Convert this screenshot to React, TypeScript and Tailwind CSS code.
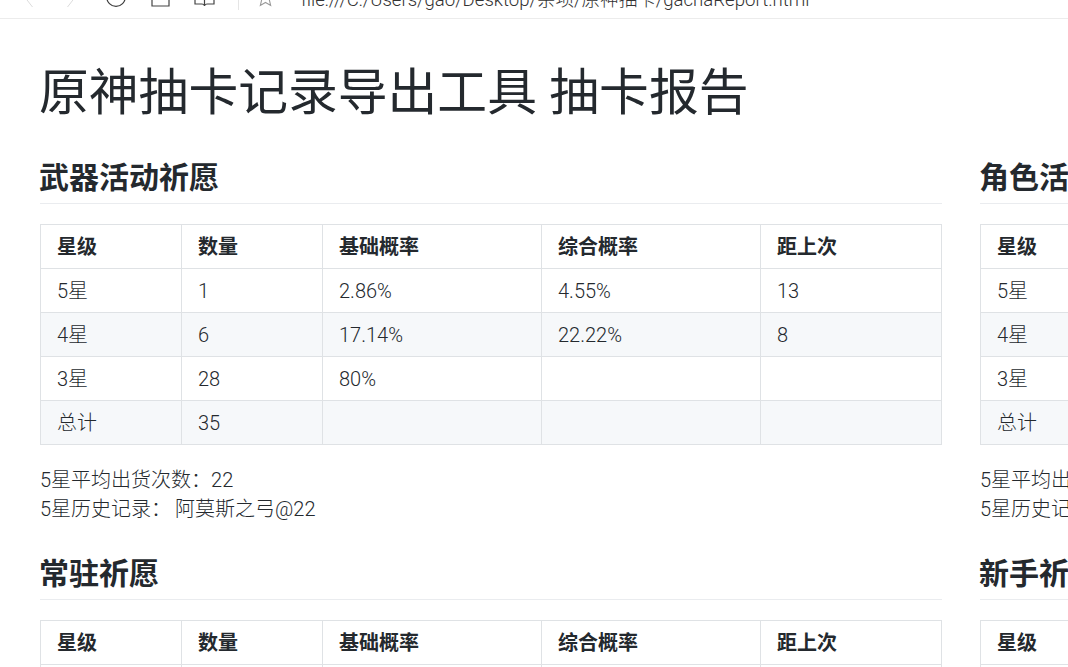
const headers = ["星级", "数量", "基础概率", "综合概率", "距上次"];

type Section = {
  title: string;
  rows: string[][];
  average: string;
  history: string;
};

const left: Section[] = [
  {
    title: "武器活动祈愿",
    rows: [
      ["5星", "1", "2.86%", "4.55%", "13"],
      ["4星", "6", "17.14%", "22.22%", "8"],
      ["3星", "28", "80%", "", ""],
      ["总计", "35", "", "", ""],
    ],
    average: "5星平均出货次数：22",
    history: "阿莫斯之弓@22",
  },
  {
    title: "常驻祈愿",
    rows: [["5星", "", "", "", ""]],
    average: "",
    history: "",
  },
];

const right: Section[] = [
  {
    title: "角色活动祈愿",
    rows: [
      ["5星", "", "", "", ""],
      ["4星", "", "", "", ""],
      ["3星", "", "", "", ""],
      ["总计", "", "", "", ""],
    ],
    average: "5星平均出货次数：",
    history: "",
  },
  {
    title: "新手祈愿",
    rows: [["5星", "", "", "", ""]],
    average: "",
    history: "",
  },
];

function Report({ section }: { section: Section }) {
  return (
    <section>
      <h2 className="h-[47px] border-b border-[#eaecef] indent-[-1px] text-[30px] leading-[42px] font-bold">
        {section.title}
      </h2>
      <table className="mt-5 w-[901px] table-fixed border-collapse">
        <colgroup>
          <col className="w-[141px]" />
          <col className="w-[141px]" />
          <col className="w-[219px]" />
          <col className="w-[219px]" />
          <col className="w-[181px]" />
        </colgroup>
        <thead>
          <tr>
            {headers.map((h) => (
              <th
                key={h}
                className="h-11 border border-[#dfe2e5] px-4 pt-0.5 text-left text-[20px] leading-[28px] font-bold"
              >
                {h}
              </th>
            ))}
          </tr>
        </thead>
        <tbody>
          {section.rows.map((row, i) => (
            <tr key={row[0]} className={i % 2 === 1 ? "bg-[#f6f8fa]" : "bg-white"}>
              {row.map((cell, j) => (
                <td
                  key={j}
                  className="h-11 border border-[#dfe2e5] px-4 pt-0.5 text-[20px] leading-[28px] font-light"
                >
                  {cell}
                </td>
              ))}
            </tr>
          ))}
        </tbody>
      </table>
      {section.average && (
        <div className="mt-[21px] mb-[29px] text-[20px] leading-[29px] font-light">
          <p>{section.average}</p>
          <p className="flex">
            <span>5星历史记录：</span>
            <span className="ml-[4px]">{section.history}</span>
          </p>
        </div>
      )}
    </section>
  );
}

function Toolbar() {
  return (
    <header className="relative h-[19px] overflow-hidden border-b border-[#ececec] bg-white">
      <div className="flex h-[18px] items-end pb-[11px]">
        <svg width="8" height="18" viewBox="0 0 8 18" fill="none" stroke="#dcdcdc" strokeWidth="1" className="ml-[25px] shrink-0">
          <path d="M7.500 0 .5 9l7 9" />
        </svg>
        <svg width="8" height="18" viewBox="0 0 8 18" fill="none" stroke="#dcdcdc" strokeWidth="1" className="ml-[34px] shrink-0">
          <path d="m.5 0 7 9-7 9" />
        </svg>
        <svg width="20" height="20" viewBox="0 0 20 20" fill="none" stroke="#3a3a3a" strokeWidth="1.2" className="ml-[31px] shrink-0">
          <circle cx="10" cy="10" r="9.3" />
        </svg>
        <svg width="19" height="20" viewBox="0 0 19 20" fill="none" stroke="#444" strokeWidth="1.2" className="ml-[25px] shrink-0">
          <path d="M1 1h17v18H1z" />
        </svg>
        <svg width="21" height="20" viewBox="0 0 21 20" fill="none" stroke="#444" strokeWidth="1.2" className="ml-[24px] shrink-0">
          <path d="M10.500 3v15M1 1v16h6.500c1.500 0 3 .600 3 2 0-1.400 1.500-2 3-2H20V1" />
        </svg>
        <span className="ml-[23px] -mb-[3px] h-[16px] w-px shrink-0 bg-[#e5e5e5]" />
        <svg width="19" height="19" viewBox="0 0 24 24" fill="none" stroke="#9a9a9a" strokeWidth="1.4" className="ml-[17px] shrink-0">
          <path d="m12 2 3 7 7.500.700-5.700 5 1.700 7.300L12 18.200 5.500 22l1.700-7.300-5.700-5L9 9z" />
        </svg>
      </div>
      <span className="absolute top-[-10px] left-[301px] text-[18.600px] leading-[20px] font-light whitespace-nowrap text-[#333]">
        file:///C:/Users/gao/Desktop/杂项/原神抽卡/gachaReport.html
      </span>
    </header>
  );
}

export default function App() {
  return (
    <div
      className="h-[667px] w-[1068px] overflow-hidden bg-white text-[#24292e]"
      style={{ fontFamily: 'Roboto, "Noto Sans CJK SC", sans-serif' }}
    >
      <Toolbar />
      <main className="w-[1900px] px-10">
        <h1 className="mt-[43px] -ml-px text-[49.800px] leading-[62.500px] font-normal">原神抽卡记录导出工具 抽卡报告</h1>
        <div className="mt-[32px] grid grid-cols-[902px_902px] gap-x-[38px]">
          <div>
            {left.map((s) => (
              <Report key={s.title} section={s} />
            ))}
          </div>
          <div>
            {right.map((s) => (
              <Report key={s.title} section={s} />
            ))}
          </div>
        </div>
      </main>
    </div>
  );
}
